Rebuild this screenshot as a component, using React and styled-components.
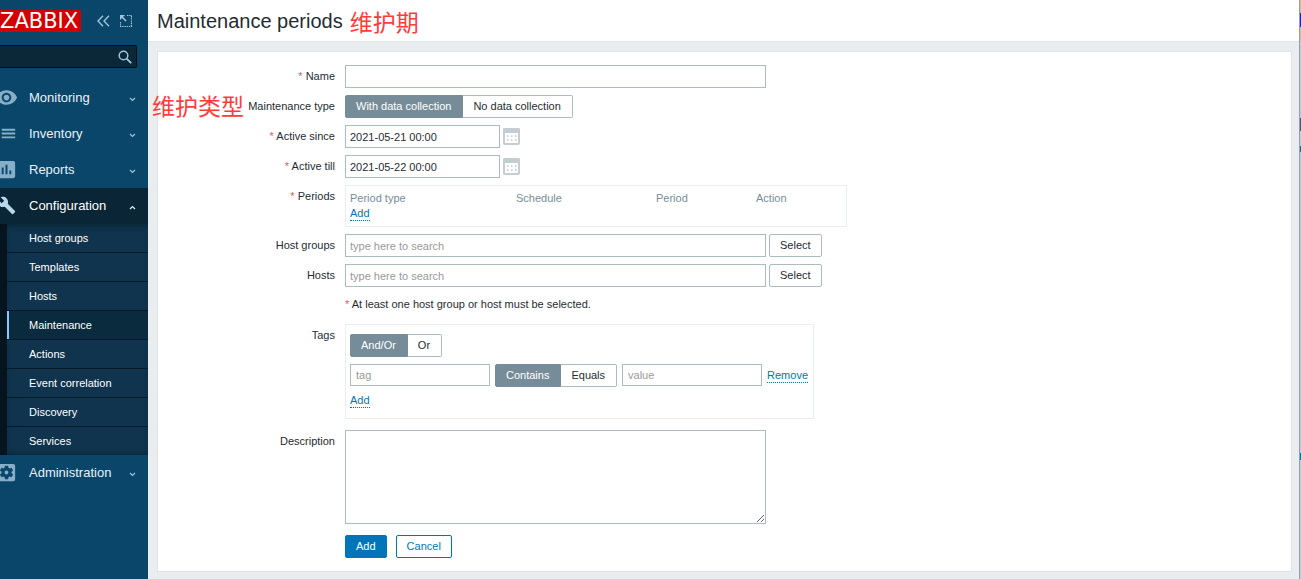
import React from 'react'
import styled, { createGlobalStyle } from 'styled-components';
import { MdVisibility, MdList, MdAssessment, MdBuild, MdSettingsApplications } from 'react-icons/md';

const GlobalStyle = createGlobalStyle`
  * {
    box-sizing: border-box;
  }

  body {
    margin: 0;
    font-family: "Liberation Sans", Arial, sans-serif;
    font-size: 11px;
    line-height: 15px;
    color: #1f2c33;
    background: #e9edf0;
  }

  button, input, textarea {
    font-family: inherit;
    font-size: 11px;
    color: #1f2c33;
    margin: 0;
  }
`;

const Page = styled.div`
  display: flex;
  min-height: 100vh;
`;

/* sidebar */

const Sidebar = styled.aside`
  flex: 0 0 148px;
  background: #0a466a;
  overflow: hidden;
`;

const SidebarHeader = styled.div`
  display: flex;
  align-items: center;
  height: 45px;
  padding-bottom: 3px;
`;

const Logo = styled.a`
  width: 81px;
  height: 22px;
  line-height: 22px;
  font-family: "DejaVu Sans", sans-serif;
  font-size: 21px;
  color: #ffffff;
  background: #d40000;
  text-decoration: none;
`;

const IconButton = styled.button`
  display: flex;
  align-self: center;
  padding: 0;
  border: 0;
  background: none;
  color: #9fc3da;
  cursor: pointer;
`;

const HeaderTools = styled.div`
  display: flex;
  gap: 10px;
  margin-left: 16px;
`;

const SearchBox = styled.form`
  display: flex;
  align-items: center;
  height: 23px;
  margin: 0 11px 12px 0;
  padding-right: 4px;
  background: #0a2838;
  border: 1px solid #020c12;
  border-left: 0;
  border-radius: 0 2px 2px 0;
`;

const SearchInput = styled.input`
  flex: 1;
  min-width: 0;
  height: 21px;
  border: 0;
  padding: 0 5px;
  background: transparent;
  color: #ffffff;
  outline: none;
`;

const MenuList = styled.ul`
  margin: 0;
  padding: 0;
  list-style: none;
`;

const MenuLink = styled.a`
  display: flex;
  align-items: center;
  height: 36px;
  padding: 0 12px 1px 0;
  font-size: 13px;
  color: ${({ $open }) => ($open ? '#ffffff' : '#e8f1f7')};
  background: ${({ $open }) => ($open ? '#0a2535' : 'transparent')};
  text-decoration: none;
`;

const MenuIcon = styled.span`
  display: flex;
  justify-content: center;
  width: 23px;
  margin: 0 11px 0 -5px;
  color: ${({ $open }) => ($open ? '#b8d8ee' : '#88afc8')};
`;

const MenuText = styled.span`
  flex: 1;
`;

const MenuArrow = styled.span`
  display: flex;
  padding-top: 3px;
`;

const SubMenu = styled.ul`
  margin: 0;
  padding: 0;
  list-style: none;
  border-left: 7px solid #05141d;
  background: #10344e;
  box-shadow: inset 0 6px 6px -4px #0a2535, inset 0 -5px 5px -4px #0a2535;

  li + li {
    border-top: 1px solid #051a27;
  }
`;

const SubMenuLink = styled.a`
  display: block;
  height: 28px;
  line-height: 28px;
  padding-left: ${({ $active }) => ($active ? '20px' : '22px')};
  border-left: ${({ $active }) => ($active ? '2px solid #86cbfb' : '0')};
  background: ${({ $active }) => ($active ? '#0a2a3e' : 'transparent')};
  color: #ffffff;
  text-decoration: none;
`;

/* content */

const Main = styled.main`
  flex: 1;
  min-width: 0;
`;

const PageHeader = styled.header`
  display: flex;
  align-items: center;
  gap: 7px;
  height: 42px;
  padding: 0 9px;
  background: #ffffff;
  border-bottom: 1px solid #dfe4e7;
`;

const Title = styled.h1`
  margin: 0;
  font-size: 20px;
  line-height: 40px;
  font-weight: 400;
`;

const Note = styled.span`
  font-family: "Noto Sans CJK SC", sans-serif;
  font-size: 23px;
  line-height: 28px;
  color: #ff3b3b;
  white-space: nowrap;
`;

const Card = styled.form`
  display: flex;
  flex-direction: column;
  gap: 7px;
  margin: 9px 7px 7px 9px;
  padding: 13px 0;
  background: #ffffff;
  border: 1px solid #dfe4e7;
`;

const Row = styled.div`
  display: grid;
  grid-template-columns: 177px 1fr;
  column-gap: 10px;
  margin-top: ${({ $spaced }) => ($spaced ? '4px' : '0')};
`;

const LabelCell = styled.div`
  position: relative;
  text-align: right;
  line-height: 23px;
`;

/* red remark that overhangs the card edge */
const SideNote = styled(Note)`
  position: absolute;
  left: -6px;
  top: -4px;
`;

const Asterisk = styled.span`
  color: #e45959;
`;

const Field = styled.div`
  display: flex;
  gap: ${({ $gap }) => $gap || '3px'};
  min-height: 23px;
`;

const TextInput = styled.input`
  width: ${({ $width }) => $width || '421px'};
  height: 23px;
  padding: 0 4px;
  border: 1px solid #acbbc2;
  background: #ffffff;

  &::placeholder {
    color: #999999;
  }
`;

const TagInput = styled(TextInput)`
  width: 140px;
  height: 22px;
  padding: 0 5px;
`;

const Area = styled.textarea`
  display: block;
  width: 421px;
  height: 94px;
  padding: 4px;
  border: 1px solid #acbbc2;
  resize: both;
`;

const Segments = styled.div`
  display: flex;
`;

const SegmentInput = styled.input`
  appearance: none;
  position: absolute;
  margin: 0;
  opacity: 0;
`;

const Segment = styled.label`
  height: 23px;
  line-height: 21px;
  padding: 0 11px 0 10px;
  border: 1px solid #acbbc2;
  border-left-width: 0;
  border-radius: 0 2px 2px 0;
  background: #ffffff;
  cursor: pointer;

  &:first-child {
    border-left-width: 1px;
    border-radius: 2px 0 0 2px;
  }

  &:has(input:checked) {
    border-color: #768d99;
    background: #768d99;
    color: #ffffff;
  }
`;

const Button = styled.button`
  height: 23px;
  padding: 0 10px;
  line-height: 21px;
  border: 1px solid ${({ $variant }) => ($variant ? '#0275b8' : '#acbbc2')};
  border-radius: 2px;
  background: ${({ $variant }) => ($variant === 'primary' ? '#0275b8' : '#ffffff')};
  color: ${({ $variant }) => ($variant === 'primary' ? '#ffffff' : $variant === 'outline' ? '#0275b8' : '#1f2c33')};
  cursor: pointer;
`;

const DottedLink = styled.a`
  display: inline-block;
  line-height: 13px;
  color: #0275b8;
  text-decoration: none;
  border-bottom: 1px dotted #0275b8;
`;

const PeriodsBox = styled.div`
  width: 502px;
  padding: 5px 4px;
  border: 1px solid #ebeef0;
`;

const PeriodsTable = styled.table`
  width: 100%;
  table-layout: fixed;
  border-collapse: collapse;

  th, td {
    height: 15px;
    padding: 0;
    font-weight: 400;
    line-height: 13px;
    text-align: left;
    vertical-align: middle;
  }

  th {
    color: #768d99;
  }
`;

const Col = styled.col`
  width: ${({ $width }) => $width};
`;

const TagsBox = styled.div`
  display: flex;
  flex-direction: column;
  align-items: flex-start;
  gap: 7px;
  padding: 9px 5px 10px 4px;
  border: 1px solid #ebeef0;
`;

const TagRow = styled.div`
  display: flex;
  align-items: flex-start;
  gap: 5px;
`;

const TagAction = styled.div`
  padding-top: 4px;
`;

const Hint = styled.p`
  margin: 0;
  line-height: 21px;
`;

const WindowEdge = styled.div`
  flex: 0 0 2px;
  border-left: 1px solid #9a9ab8;
  background: linear-gradient(
    #e0b98a 0 13px, #2020c0 13px 27px, #e0b98a 27px 41px, #cccccc 41px 118px,
    #555566 118px 131px, #cccccc 131px 146px, #336677 146px 152px,
    #c8c8c8 152px 453px, #0275a8 453px 460px, #cccccc 460px
  );
`;

const Chevron = ({ up }) => (
  <svg width="7" height="5" viewBox="0 0 7 5" fill="none" stroke={up ? '#e0eef7' : '#a3c3d6'} strokeWidth="1.2">
    <path d={up ? 'M1 4 3.5 1.5 6 4' : 'M1 1 3.5 3.5 6 1'} />
  </svg>
);

const CollapseIcon = () => (
  <svg width="13" height="12" viewBox="0 0 13 12" fill="none" stroke="currentColor" strokeWidth="1.4">
    <path d="M6 .7 1 6l5 5.3M12 .7 7 6l5 5.3" />
  </svg>
);

const KioskIcon = () => (
  <svg width="12" height="12" viewBox="0 0 12 12" fill="none" stroke="currentColor">
    <path d="M7 .5h5M11.5 1v11M.5 7v5M0 11.5h12" strokeDasharray="1.4 .8" strokeWidth="1.2" />
    <path d="M1.5 1.5 6 6" strokeWidth="1.6" />
    <path d="M0 0h5L0 5z" fill="currentColor" stroke="none" />
  </svg>
);

const SearchIcon = () => (
  <svg width="14" height="14" viewBox="0 0 14 14" fill="none" stroke="currentColor">
    <circle cx="5.5" cy="5.5" r="4.3" strokeWidth="1.5" />
    <path d="m8.6 8.6 4.6 4.6" strokeWidth="1.9" />
  </svg>
);

const CalendarIcon = () => (
  <svg width="17" height="17" viewBox="0 0 17 17">
    <rect x="1" y="1" width="15" height="15" rx="1" fill="#ffffff" stroke="#c3cdd2" strokeWidth="2" />
    <path d="M0 1.5Q0 0 1.5 0h14Q17 0 17 1.5V5H0z" fill="#c3cdd2" />
    <path d="M4 8h1.5M8 8h1.5M12 8h1.5M4 12h1.5M8 12h1.5M12 12h1.5" stroke="#b9c5cb" strokeWidth="1.6" />
  </svg>
);

const menu = [
  { name: 'Monitoring', Icon: MdVisibility, size: 23 },
  { name: 'Inventory', Icon: MdList, size: 23 },
  { name: 'Reports', Icon: MdAssessment, size: 23 },
  {
    name: 'Configuration',
    Icon: MdBuild,
    size: 19,
    items: ['Host groups', 'Templates', 'Hosts', 'Maintenance', 'Actions', 'Event correlation', 'Discovery', 'Services'],
  },
  { name: 'Administration', Icon: MdSettingsApplications, size: 23 },
];

const FormRow = ({ label, id, required, note, spaced, gap, children }) => (
  <Row $spaced={spaced}>
    <LabelCell>
      {note && <SideNote>{note}</SideNote>}
      {required && <Asterisk>* </Asterisk>}
      {label && (id ? <label htmlFor={id}>{label}</label> : <span>{label}</span>)}
    </LabelCell>
    <Field $gap={gap}>{children}</Field>
  </Row>
);

const SegmentedControl = ({ name, options }) => (
  <Segments role="radiogroup" aria-label={name}>
    {options.map((option, i) => (
      <Segment key={option}>
        <SegmentInput type="radio" name={name} value={option} defaultChecked={i === 0} />
        {option}
      </Segment>
    ))}
  </Segments>
);

const DateField = ({ id, value }) => (
  <>
    <TextInput id={id} $width="155px" defaultValue={value} />
    <IconButton type="button" aria-label="Open calendar">
      <CalendarIcon />
    </IconButton>
  </>
);

function SideMenu() {
  return (
    <Sidebar>
      <SidebarHeader>
        <Logo href="#">ZABBIX</Logo>
        <HeaderTools>
          <IconButton type="button" aria-label="Collapse sidebar"><CollapseIcon /></IconButton>
          <IconButton type="button" aria-label="Kiosk mode"><KioskIcon /></IconButton>
        </HeaderTools>
      </SidebarHeader>
      <SearchBox>
        <SearchInput type="text" aria-label="Search" />
        <IconButton type="button" aria-label="Search"><SearchIcon /></IconButton>
      </SearchBox>
      <nav>
        <MenuList>
          {menu.map(({ name, Icon, size, items }) => (
            <li key={name}>
              <MenuLink href="#" $open={!!items}>
                <MenuIcon $open={!!items}><Icon size={size} /></MenuIcon>
                <MenuText>{name}</MenuText>
                <MenuArrow><Chevron up={!!items} /></MenuArrow>
              </MenuLink>
              {items && (
                <SubMenu>
                  {items.map((item) => (
                    <li key={item}>
                      <SubMenuLink href="#" $active={item === 'Maintenance'}>{item}</SubMenuLink>
                    </li>
                  ))}
                </SubMenu>
              )}
            </li>
          ))}
        </MenuList>
      </nav>
    </Sidebar>
  )
}

function MaintenanceForm() {
  return (
    <Card>
      <FormRow label="Name" id="name" required>
        <TextInput id="name" />
      </FormRow>
      <FormRow label="Maintenance type" note="维护类型">
        <SegmentedControl name="Maintenance type" options={['With data collection', 'No data collection']} />
      </FormRow>
      <FormRow label="Active since" id="since" required>
        <DateField id="since" value="2021-05-21 00:00" />
      </FormRow>
      <FormRow label="Active till" id="till" required>
        <DateField id="till" value="2021-05-22 00:00" />
      </FormRow>
      <FormRow label="Periods" required>
        <PeriodsBox>
          <PeriodsTable>
            <colgroup>
              <Col $width="166px" />
              <Col $width="140px" />
              <Col $width="100px" />
              <Col />
            </colgroup>
            <thead>
              <tr>
                <th>Period type</th>
                <th>Schedule</th>
                <th>Period</th>
                <th>Action</th>
              </tr>
            </thead>
            <tbody>
              <tr>
                <td colSpan="4"><DottedLink href="#">Add</DottedLink></td>
              </tr>
            </tbody>
          </PeriodsTable>
        </PeriodsBox>
      </FormRow>
      <FormRow label="Host groups" id="groups">
        <TextInput id="groups" placeholder="type here to search" />
        <Button type="button">Select</Button>
      </FormRow>
      <FormRow label="Hosts" id="hosts">
        <TextInput id="hosts" placeholder="type here to search" />
        <Button type="button">Select</Button>
      </FormRow>
      <FormRow>
        <Hint><Asterisk>* </Asterisk>At least one host group or host must be selected.</Hint>
      </FormRow>
      <FormRow label="Tags">
        <TagsBox>
          <SegmentedControl name="Tag evaluation" options={['And/Or', 'Or']} />
          <TagRow>
            <TagInput placeholder="tag" aria-label="Tag" />
            <SegmentedControl name="Tag operator" options={['Contains', 'Equals']} />
            <TagInput placeholder="value" aria-label="Value" />
            <TagAction><DottedLink href="#">Remove</DottedLink></TagAction>
          </TagRow>
          <DottedLink href="#">Add</DottedLink>
        </TagsBox>
      </FormRow>
      <FormRow label="Description" id="description" spaced>
        <Area id="description" />
      </FormRow>
      <FormRow spaced gap="9px">
        <Button type="button" $variant="primary">Add</Button>
        <Button type="button" $variant="outline">Cancel</Button>
      </FormRow>
    </Card>
  )
}

function App() {
  return (
    <>
      <GlobalStyle />
      <Page>
        <SideMenu />
        <Main>
          <PageHeader>
            <Title>Maintenance periods</Title>
            <Note>维护期</Note>
          </PageHeader>
          <MaintenanceForm />
        </Main>
        <WindowEdge />
      </Page>
    </>
  )
}

export default App;
